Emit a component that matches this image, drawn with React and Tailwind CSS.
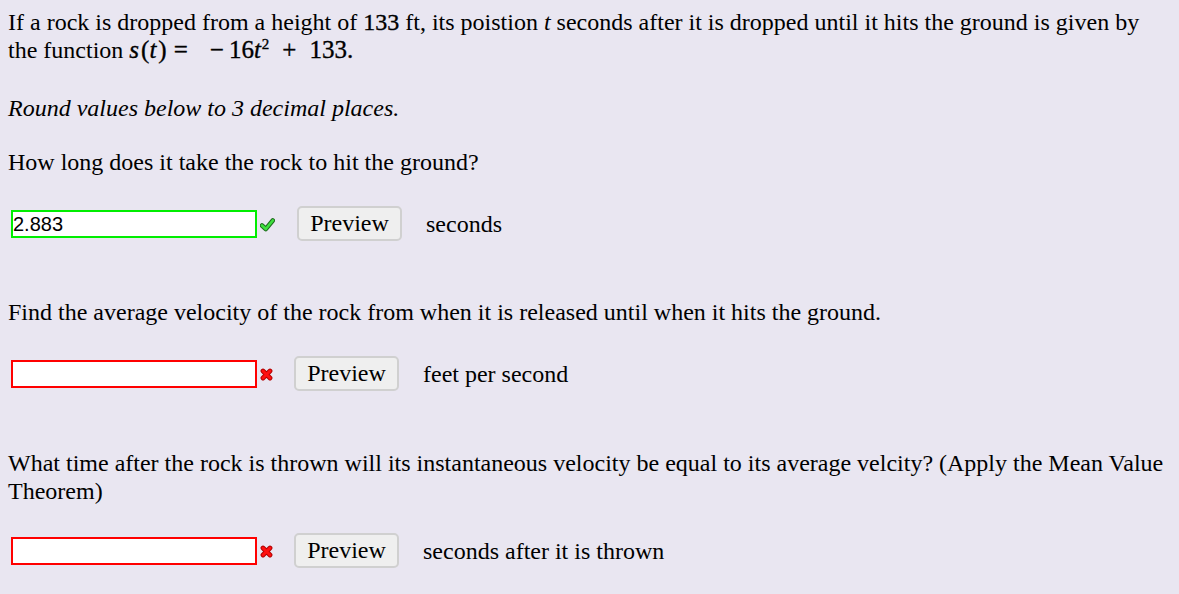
import React from "react";

const Check = () => (
  <svg width="15" height="14" viewBox="0 0 15 14" className="shrink-0">
    <path d="M2 7.5 L5.8 11 L12.8 2.5" fill="none" stroke="#1f6b1f" strokeWidth="4.6" strokeLinejoin="round" strokeLinecap="round" />
    <path d="M2 7.5 L5.8 11 L12.8 2.5" fill="none" stroke="#3ee03e" strokeWidth="2.6" strokeLinejoin="round" strokeLinecap="round" />
  </svg>
);

const Cross = () => (
  <svg width="13" height="13" viewBox="0 0 13 13" className="shrink-0">
    <path d="M3 3 L10 10 M10 3 L3 10" fill="none" stroke="#b00000" strokeWidth="4.8" strokeLinecap="round" />
    <path d="M3 3 L10 10 M10 3 L3 10" fill="none" stroke="#ff1010" strokeWidth="3" strokeLinecap="round" />
  </svg>
);

const Answer = ({ value, ok, unit }) => (
  <div className="flex items-center h-[35px] pl-[3px]">
    <div
      className={`w-[246px] h-[28px] bg-white border-2 ${ok ? "border-[#00ee00]" : "border-[#ff0000]"} flex items-center text-[20px] leading-none text-black`}
      style={{ fontFamily: '"Liberation Sans", Arial, sans-serif' }}
    >
      {value}
    </div>
    <div className={ok ? "ml-[3px] mr-[22px] mt-[2px]" : "ml-[3px] mr-[21px] mt-[2px]"}>{ok ? <Check /> : <Cross />}</div>
    <button className="w-[105px] h-[35px] bg-[#efefef] border-2 border-[#d0d0d0] rounded-[5px] text-[24px] leading-none text-black pb-[2px]">
      Preview
    </button>
    <span className="ml-[24px]">{unit}</span>
  </div>
);

export default function App() {
  return (
    <div
      className="min-h-[594px] w-full bg-[#e9e6f1] text-black text-[24px] leading-[28px] pl-[8px] pr-[12px] pt-[8px]"
      style={{ fontFamily: '"Liberation Serif", "Times New Roman", serif' }}
    >
      <p>
        If a rock is dropped from a height of <span className="[-webkit-text-stroke:0.35px]">133</span> ft, its poistion{" "}
        <i>t</i> seconds after it is dropped until it hits the ground is given by the function{" "}
        <span className="[-webkit-text-stroke:0.35px] text-[25px] leading-none">
          <i className="pr-[2px]">s</i>(<i className="pr-[2px]">t</i>)<span className="ml-[7px] mr-[22px]">=</span>
          <span className="mr-[5px]">−</span>16<i className="pr-[1px]">t</i>
          <span className="relative -top-[9px] text-[15px] leading-none">2</span>
          <span className="mx-[13px]">+</span>133.
        </span>
      </p>
      <p className="mt-[30px] italic">Round values below to 3 decimal places.</p>
      <p className="mt-[26px]">How long does it take the rock to hit the ground?</p>
      <div className="mt-[30px]">
        <Answer value="2.883" ok unit="seconds" />
      </div>
      <p className="mt-[57px]">Find the average velocity of the rock from when it is released until when it hits the ground.</p>
      <div className="mt-[30px]">
        <Answer value="" ok={false} unit="feet per second" />
      </div>
      <p className="mt-[58px]">
        What time after the rock is thrown will its instantaneous velocity be equal to its average velcity? (Apply the Mean Value Theorem)
      </p>
      <div className="mt-[28px]">
        <Answer value="" ok={false} unit="seconds after it is thrown" />
      </div>
    </div>
  );
}
